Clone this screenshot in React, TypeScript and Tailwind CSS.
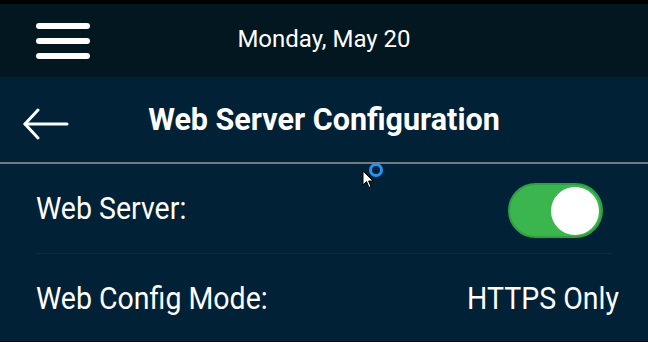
import React from "react";

function Toggle() {
  return (
    <div className="mr-[9px] mt-[4px] flex h-[55px] w-[95px] items-center justify-end rounded-full border-2 border-[#2f9e44] bg-[#3bb54d] pr-[2px]">
      <div className="h-[48px] w-[48px] rounded-full bg-white" />
    </div>
  );
}

export default function App() {
  return (
    <div className="relative h-[342px] w-[648px] overflow-hidden bg-black pt-[4px] font-['Roboto','Liberation_Sans',sans-serif] text-white">
      {/* top bar */}
      <div className="grid h-[73px] grid-cols-[1fr_auto_1fr] items-center bg-[#021720]">
        <div className="flex flex-col gap-[9px] pl-[36px]">
          <div className="h-[6px] w-[54px] rounded-full bg-white" />
          <div className="h-[6px] w-[54px] rounded-full bg-white" />
          <div className="h-[6px] w-[54px] rounded-full bg-white" />
        </div>
        <span className="inline-block pb-[4px] text-[24px] leading-none">Monday, May 20</span>
        <div />
      </div>
      {/* title bar */}
      <div className="grid h-[85px] grid-cols-[1fr_auto_1fr] items-center bg-[#012137]">
        <div className="pl-[23px] pt-[8px]">
          <svg width="46" height="32" viewBox="0 0 46 32" fill="none" stroke="white" strokeWidth="3" strokeLinecap="round" strokeLinejoin="round">
            <path d="M2 16H44" />
            <path d="M15 2L2 16L15 30" />
          </svg>
        </div>
        <span className="inline-block pt-[2px] text-[30.5px] font-bold leading-none">Web Server Configuration</span>
        <div />
      </div>
      <div className="h-[2px] bg-[#737b80]" />
      <div className="bg-[#012137] px-[36px]">
        <div className="flex h-[90px] items-center justify-between border-b border-[#0d2c42]">
          <span className="inline-block scale-y-110 pt-[2px] text-[28.5px] leading-none">Web Server:</span>
          <Toggle />
        </div>
        <div className="flex h-[87px] items-center justify-between pt-[4px]">
          <span className="inline-block scale-y-110 text-[28.5px] leading-none">Web Config Mode:</span>
          <span className="-mr-[7px] inline-block scale-y-110 text-[28.5px] leading-none">HTTPS Only</span>
        </div>
      </div>
      {/* cursor overlay */}
      <div className="absolute left-[369px] top-[163px] h-[14px] w-[14px] rounded-full border-[3px] border-[#2196f3]" />
      <svg className="absolute left-[362px] top-[170px]" width="12" height="19" viewBox="0 0 12 19">
        <path d="M1 1L1 15L4.5 11.5L7 17.5L9 16.6L6.6 11L11 11Z" fill="white" stroke="black" strokeWidth="1" />
      </svg>
    </div>
  );
}
